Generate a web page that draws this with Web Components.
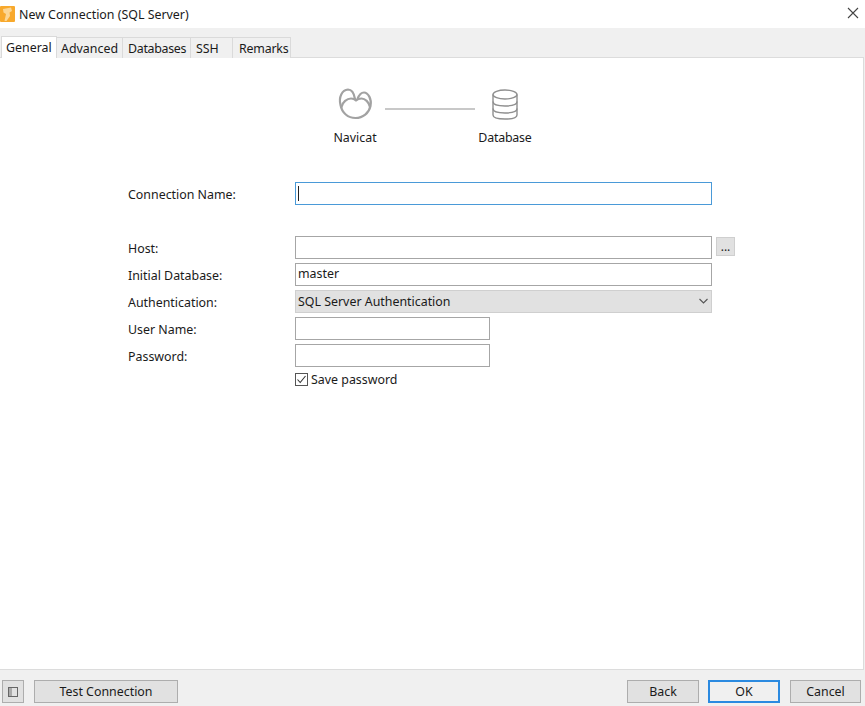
<!doctype html>
<html lang="en">
<head>
<meta charset="utf-8">
<title>New Connection (SQL Server)</title>
<style>
	html, body { margin: 0; height: 100%; }
	body {
		width: 865px;
		height: 706px;
		overflow: hidden;
		font-family: "Noto Sans", "Open Sans", "Liberation Sans", sans-serif;
		font-size: 12.4px;
		color: #1a1a1a;
	}
</style>
</head>
<body>
<nc-dialog>
	<nc-tabs slot="tabs"></nc-tabs>
	<nc-diagram></nc-diagram>
	<nc-form></nc-form>
	<nc-footer slot="footer"></nc-footer>
</nc-dialog>

<script>
/* small helper so each element only has to say its markup */
class Shadowed extends HTMLElement {
	constructor() {
		super();
		this.attachShadow({ mode: 'open' }).innerHTML = this.constructor.markup;
	}
}

class NcDialog extends Shadowed {
	static markup = `
		<style>
			:host { display: flex; flex-direction: column; width: 865px; height: 706px; background: #f0f0f0; }
			.title { display: flex; align-items: center; height: 28px; background: #fff; flex: none; }
			.logo { width: 15px; height: 16px; margin: -1px 4px 0 0; display: block; }
			.name { flex: 1; }
			.close { width: 12px; height: 12px; margin: -2px 6px 0 0; display: block; }
			.page { flex: 1; min-height: 0; background: #fff; border: solid #dcdcdc; border-width: 1px 1px 1px 0; margin-right: 1px; display: flex; flex-direction: column; }
		</style>
		<div class="title">
			<svg class="logo" viewBox="0 0 15 16"><rect width="15" height="16" rx="1" fill="#f8a92c"/><path d="M3 3 11 1.5 12 5 9.5 6.5 10 10 6.5 15 4.5 15 6 8 3.5 6.5Z" fill="#fcd694"/></svg>
			<span class="name">New Connection (SQL Server)</span>
			<svg class="close" viewBox="0 0 12 12"><path d="M1 1 11 11M11 1 1 11" stroke="#444" stroke-width="1.1" fill="none"/></svg>
		</div>
		<slot name="tabs"></slot>
		<div class="page"><slot></slot></div>
		<slot name="footer"></slot>
	`;
}

class NcTabs extends Shadowed {
	static markup = `
		<style>
			:host { display: flex; align-items: flex-end; height: 30px; padding-left: 1px; flex: none; margin-bottom: -1px; position: relative; z-index: 1; }
			.tab { box-sizing: border-box; height: 21px; line-height: 22px; padding-left: 5px; background: #f0f0f0; border: 1px solid #dadada; border-width: 1px 1px 0 0; white-space: nowrap; }
			.on { height: 22px; line-height: 21px; background: #fff; border-left-width: 1px; width: 56px; padding-left: 4px; padding-bottom: 1px; }
			.adv { width: 66px; padding-left: 4px; }
			.db { width: 68px; letter-spacing: -0.3px; }
			.ssh { width: 42px; }
			.rem { width: 58px; padding-left: 6px; letter-spacing: -0.2px; }
		</style>
		<div class="tab on">General</div>
		<div class="tab adv">Advanced</div>
		<div class="tab db">Databases</div>
		<div class="tab ssh">SSH</div>
		<div class="tab rem">Remarks</div>
	`;
}

class NcDiagram extends Shadowed {
	static markup = `
		<style>
			:host { display: flex; padding-left: 325px; margin-top: 29px; height: 94px; flex: none; }
			.node { display: flex; flex-direction: column; align-items: center; width: 60px; }
			svg.icon { width: 36px; height: 36px; display: block; margin: 1px 0 5px; }
			.line { width: 90px; height: 2px; background: #c8c8c8; margin-top: 21px; }
			span { line-height: 18px; white-space: nowrap; }
			.db { letter-spacing: -0.2px; }
		</style>
		<div class="node">
			<svg class="icon" viewBox="0 0 36 36" fill="none" stroke="#a2a2a2" stroke-width="2.2" stroke-linecap="round" stroke-linejoin="round">
				<path d="M18 11C17 5 15 1.5 11 1.5C5 2 1.5 9 3.5 17C5 25 11 30 18.5 30C26 30 32 25 33.5 18C35 11 31 4.5 27 4.5C24 4.5 22 7 20.5 11"/>
				<path d="M4.5 19C5.5 14 10 10.5 14 10.5C16 10.5 18 11.5 19 12.5C20 11.5 22.5 10.5 24.5 10.5C28 10.5 32 14 33 19"/>
			</svg>
			<span>Navicat</span>
		</div>
		<div class="line"></div>
		<div class="node">
			<svg class="icon" viewBox="0 0 36 36" fill="none" stroke="#8f8f8f" stroke-width="1.4">
				<ellipse cx="18" cy="6.5" rx="12" ry="4.5"/>
				<path d="M6 6.5V27C6 29.5 11 31 18 31S30 29.5 30 27V6.5"/>
				<path d="M6 13.5C6 16.5 11 18 18 18S30 16.5 30 13.5"/>
				<path d="M6 20.5C6 23.5 11 25 18 25S30 23.5 30 20.5"/>
			</svg>
			<span class="db">Database</span>
		</div>
	`;
}

class NcField extends Shadowed {
	static markup = `
		<style>
			:host { display: grid; grid-template-columns: 167px auto 1fr; align-items: center; height: 24px; }
			label { padding-top: 2px; }
			.box { box-sizing: border-box; height: 23px; width: var(--w, 417px); border: 1px solid #a6a6a6; background: #fff; padding-left: 2px; line-height: 21px; display: flex; align-items: center; justify-content: space-between; }
			:host([focused]) .box { border-color: #4a9ad8; }
			:host([select]) .box { background: #e1e1e1; border-color: #cfcfcf; padding: 0 3px 0 2px; }
			.side { display: flex; }
		</style>
		<label><slot name="label"></slot></label>
		<div class="box"><slot></slot></div>
		<div class="side"><slot name="side"></slot></div>
	`;
}

class NcForm extends Shadowed {
	static markup = `
		<style>
			:host { display: flex; flex-direction: column; padding-left: 128px; flex: none; }
			nc-field { margin-bottom: 3px; }
			.gap { height: 27px; }
			.cursor { width: 1px; height: 15px; background: #222; display: block; }
			.value { margin-top: -2px; }
			.more { box-sizing: border-box; margin: -1px 0 0 4px; width: 19px; height: 19px; background: #e1e1e1; border: 1px solid #cfcfcf; font-size: 12px; line-height: 17px; text-align: center; color: #222; }
			.short { --w: 195px; }
			.save { display: flex; align-items: center; margin: -1px 0 0 167px; height: 20px; gap: 3px; }
			.save svg { width: 13px; height: 13px; display: block; }
		</style>
		<nc-field focused><span slot="label">Connection Name:</span><span class="cursor"></span></nc-field>
		<div class="gap"></div>
		<nc-field><span slot="label">Host:</span><div class="more" slot="side">...</div></nc-field>
		<nc-field><span slot="label">Initial Database:</span><span class="value">master</span></nc-field>
		<nc-field select><span slot="label">Authentication:</span>SQL Server Authentication<svg width="9" height="6" viewBox="0 0 9 6"><path d="M.5 1 4.5 5 8.5 1" fill="none" stroke="#555" stroke-width="1.1"/></svg></nc-field>
		<nc-field class="short"><span slot="label">User Name:</span></nc-field>
		<nc-field class="short"><span slot="label">Password:</span></nc-field>
		<div class="save">
			<svg viewBox="0 0 13 13"><rect x=".5" y=".5" width="12" height="12" fill="#fff" stroke="#555"/><path d="M2.5 6.5 5.2 9.5 10.5 3" fill="none" stroke="#333" stroke-width="1.1"/></svg>
			<span>Save password</span>
		</div>
	`;
}

class NcButton extends Shadowed {
	static markup = `
		<style>
			:host { display: block; box-sizing: border-box; height: 23px; line-height: 21px; text-align: center; background: #e1e1e1; border: 1px solid #adadad; }
			:host([primary]) { border: 2px solid #2b8ae0; line-height: 19px; background: #f0f0f0; }
		</style>
		<slot></slot>
	`;
}

class NcFooter extends Shadowed {
	static markup = `
		<style>
			:host { display: flex; align-items: flex-end; height: 36px; box-sizing: border-box; padding: 0 4px 3px 2px; flex: none; }
			.side { width: 22px; display: flex; align-items: center; justify-content: center; }
			.side svg { display: block; }
			.left { margin-left: 10px; width: 144px; }
			.grow { flex: 1; }
			.back { width: 72px; }
			.ok { width: 72px; margin-left: 9px; }
			.cancel { width: 71px; margin-left: 10px; }
		</style>
		<nc-button class="side"><svg width="10" height="10" viewBox="0 0 10 10"><rect x=".5" y=".5" width="9" height="9" fill="none" stroke="#666"/><rect x="1" y="1" width="3" height="8" fill="#aaa"/></svg></nc-button>
		<nc-button class="left">Test Connection</nc-button>
		<div class="grow"></div>
		<nc-button class="back">Back</nc-button>
		<nc-button class="ok" primary>OK</nc-button>
		<nc-button class="cancel">Cancel</nc-button>
	`;
}

customElements.define('nc-dialog', NcDialog);
customElements.define('nc-tabs', NcTabs);
customElements.define('nc-diagram', NcDiagram);
customElements.define('nc-field', NcField);
customElements.define('nc-form', NcForm);
customElements.define('nc-button', NcButton);
customElements.define('nc-footer', NcFooter);
</script>
</body>
</html>
